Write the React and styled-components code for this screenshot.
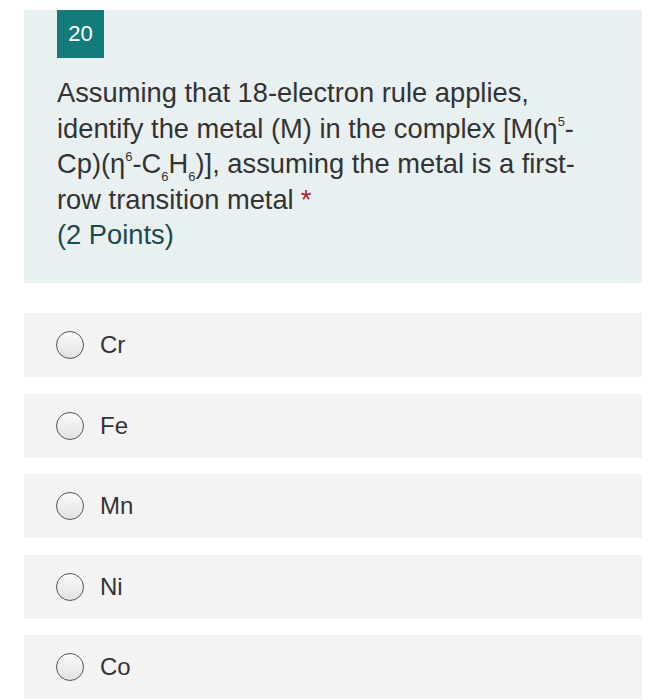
import React from 'react'
import styled, { createGlobalStyle } from 'styled-components';

const GlobalStyle = createGlobalStyle`
  body {
    margin: 0;
    background: #ffffff;
    font-family: "Liberation Sans", Arial, sans-serif;
  }
`;

const Page = styled.div`
  width: 660px;
  padding: 10px 18px 0 24px;
  box-sizing: border-box;
  display: flex;
  flex-direction: column;
  gap: 30px;
`;

const QuestionCard = styled.div`
  background-color: #e9f0f2;
  padding: 0 33px 30px 33px;
`;

const Badge = styled.div`
  width: 47px;
  height: 48px;
  background-color: #137c7a;
  color: #ffffff;
  font-size: 22px;
  display: flex;
  align-items: center;
  justify-content: center;
`;

const QuestionText = styled.div`
  margin-top: 17px;
  font-size: 27.3px;
  line-height: 35.5px;
  color: #333333;
  white-space: nowrap;

  sup, sub {
    font-size: 13px;
    line-height: 0;
    position: relative;
    vertical-align: baseline;
  }
  sup { top: -12px; }
  sub { top: 8px; }

  .required {
    color: #a4262c;
    margin-left: 7px;
  }
`;

const Points = styled.div`
  font-size: 27.3px;
  line-height: 36px;
  color: #1e4a4a;
`;

const Options = styled.div`
  display: flex;
  flex-direction: column;
  gap: 16.5px;
`;

const Option = styled.label`
  height: 64px;
  background-color: #f3f3f3;
  display: flex;
  align-items: center;
  padding-left: 32px;
  gap: 16px;
  font-size: 24px;
  color: #333333;
`;

const Radio = styled.span`
  width: 26px;
  height: 26px;
  border-radius: 50%;
  border: 1.5px solid #555555;
  background: linear-gradient(180deg, #fbfbfb 0%, #e2e2e2 100%);
  flex-shrink: 0;
`;

const choices = ['Cr', 'Fe', 'Mn', 'Ni', 'Co'];

const App = () => {
    return (
        <>
            <GlobalStyle />
            <Page>
                <QuestionCard>
                    <Badge>20</Badge>
                    <QuestionText>
                        Assuming that 18-electron rule applies,<br />
                        identify the metal (M) in the complex [M(η<sup>5</sup>-<br />
                        Cp)(η<sup>6</sup>-C<sub>6</sub>H<sub>6</sub>)], assuming the metal is a first-<br />
                        row transition metal<span className="required">*</span>
                    </QuestionText>
                    <Points>(2 Points)</Points>
                </QuestionCard>
                <Options>
                    {choices.map((c) => (
                        <Option key={c}>
                            <Radio />
                            {c}
                        </Option>
                    ))}
                </Options>
            </Page>
        </>
    )
}

export default App
